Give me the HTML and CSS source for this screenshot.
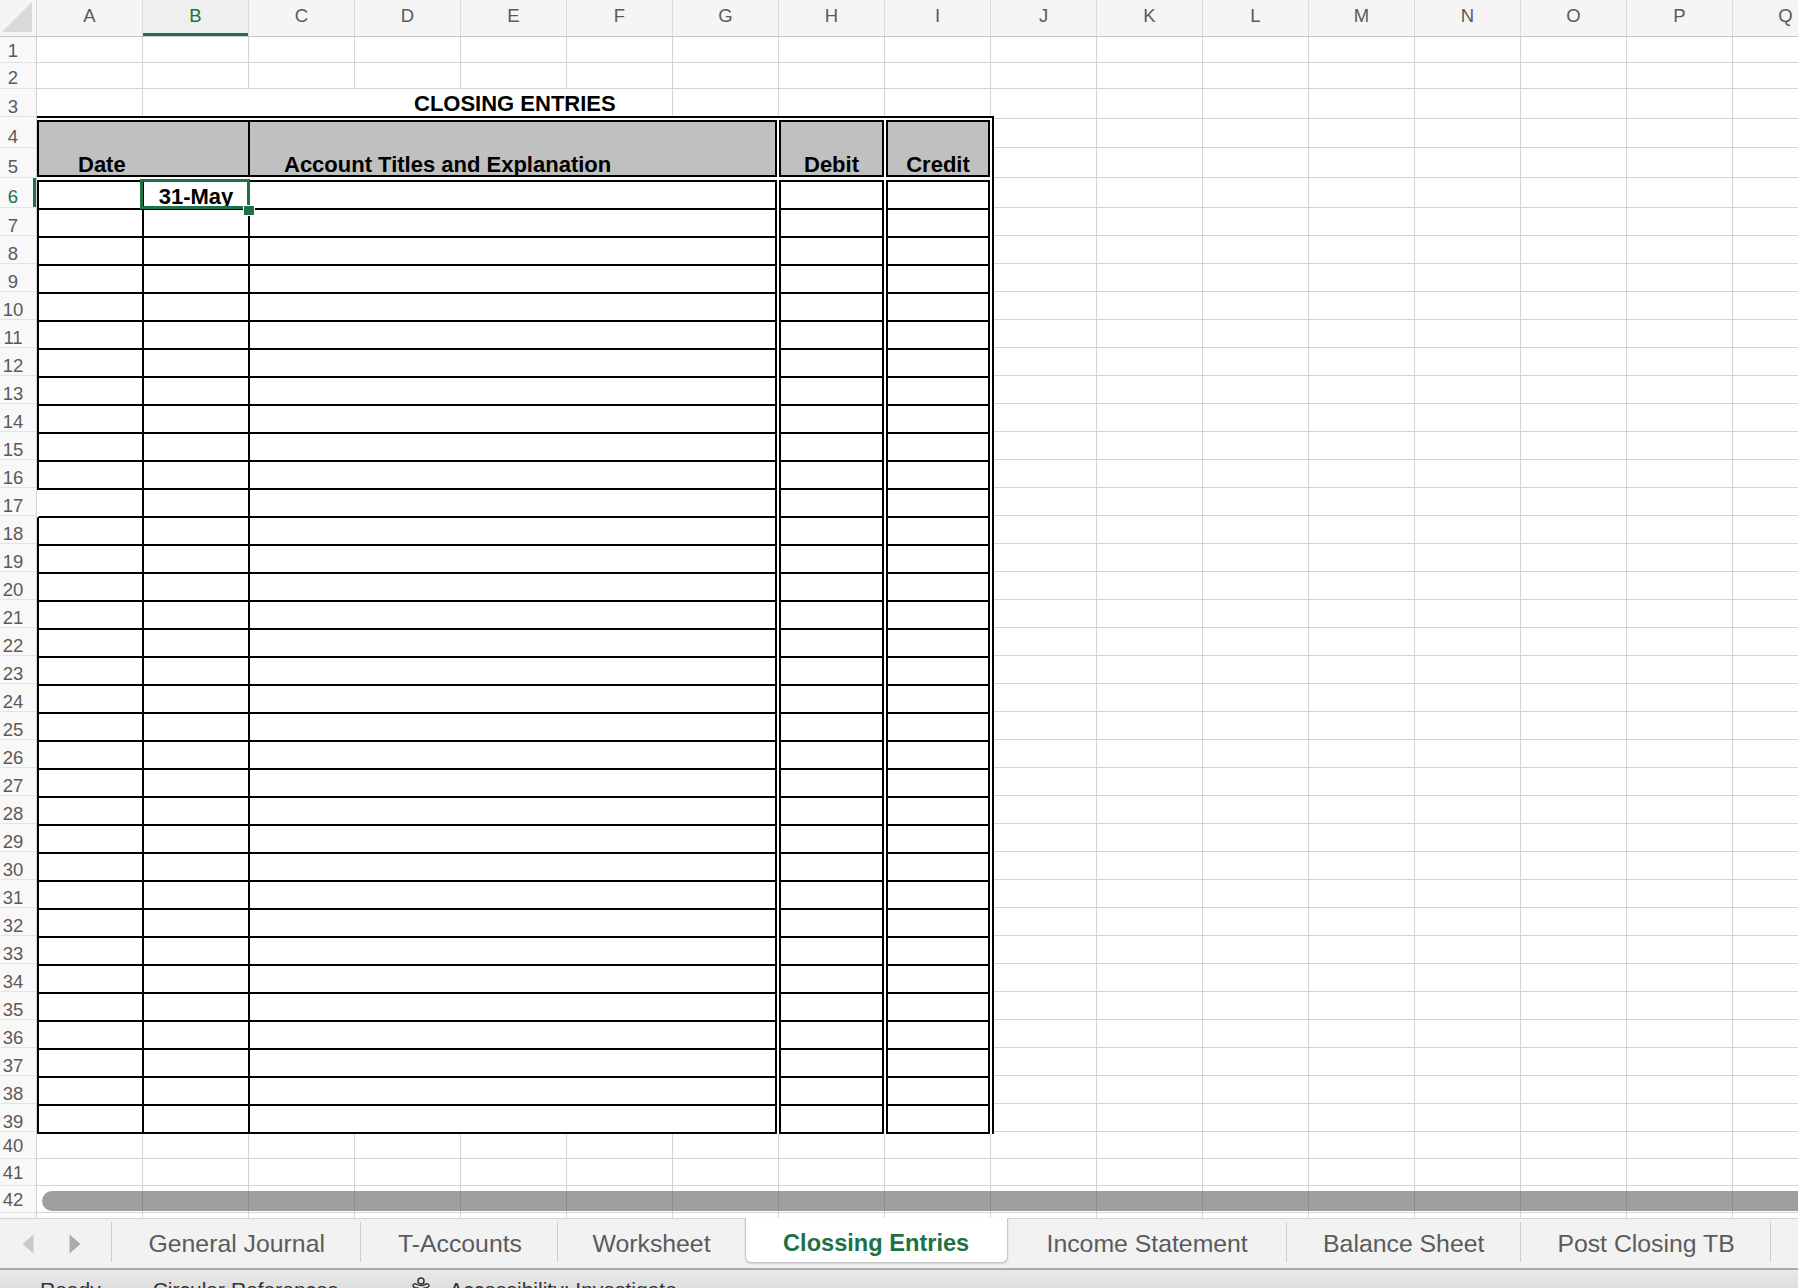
FILE: index.html
```html
<!DOCTYPE html>
<html lang="en">
<head>
<meta charset="utf-8">
<title>Closing Entries</title>
<link rel="stylesheet" href="styles.css">
</head>
<body>
<div class="app">
  <div class="sheet">
    <div class="colhdr">
      <div class="corner"><svg width="30" height="30" viewBox="0 0 30 30"><path d="M30 0 L30 30 L0 30 Z" fill="#d9d9d9"/></svg></div>
      <div class="ch">A</div><div class="ch sel">B</div><div class="ch">C</div><div class="ch">D</div><div class="ch">E</div><div class="ch">F</div><div class="ch">G</div><div class="ch">H</div><div class="ch">I</div><div class="ch">J</div><div class="ch">K</div><div class="ch">L</div><div class="ch">M</div><div class="ch">N</div><div class="ch">O</div><div class="ch">P</div><div class="ch">Q</div>
    </div>
    <div class="grid">
      <div class="rowhdr">
        <div class="rh h26">1</div>
        <div class="rh h26 r2">2</div>
        <div class="rh h28">3</div>
        <div class="rh h31">4</div>
        <div class="rh h30">5</div>
        <div class="rh h30 sel">6</div>
        <div class="rh h28">7</div>
        <div class="rh h28">8</div>
        <div class="rh h28">9</div>
        <div class="rh h28">10</div>
        <div class="rh h28">11</div>
        <div class="rh h28">12</div>
        <div class="rh h28">13</div>
        <div class="rh h28">14</div>
        <div class="rh h28">15</div>
        <div class="rh h28">16</div>
        <div class="rh h28">17</div>
        <div class="rh h28">18</div>
        <div class="rh h28">19</div>
        <div class="rh h28">20</div>
        <div class="rh h28">21</div>
        <div class="rh h28">22</div>
        <div class="rh h28">23</div>
        <div class="rh h28">24</div>
        <div class="rh h28">25</div>
        <div class="rh h28">26</div>
        <div class="rh h28">27</div>
        <div class="rh h28">28</div>
        <div class="rh h28">29</div>
        <div class="rh h28">30</div>
        <div class="rh h28">31</div>
        <div class="rh h28">32</div>
        <div class="rh h28">33</div>
        <div class="rh h28">34</div>
        <div class="rh h28">35</div>
        <div class="rh h28">36</div>
        <div class="rh h28">37</div>
        <div class="rh h28">38</div>
        <div class="rh h28">39</div>
        <div class="rh h27">40</div>
        <div class="rh h27">41</div>
        <div class="rh h27">42</div>
        <div class="rh h27">43</div>
      </div>
      <div class="cells">
        <div class="g h26"></div>
        <div class="g h26"></div>
        <div class="row3">
          <div class="c3a"></div>
          <div class="c3t">CLOSING ENTRIES</div>
          <div class="c3r"></div>
        </div>
        <div class="mid">
          <div class="tbl">
            <div class="thead">
              <div class="hd hdate">Date</div>
              <div class="hd hacct">Account Titles and Explanation</div>
              <div class="hd hdebit">Debit</div>
              <div class="hd hcredit">Credit</div>
            </div>
            <div class="tbody">
              <div class="tr"><span class="da"></span><span class="db cur">31-May<span class="selbox"></span><span class="handle"></span></span><span class="dc"></span><span class="dh"></span><span class="di"></span></div>
              <div class="tr"><span class="da"></span><span class="db"></span><span class="dc"></span><span class="dh"></span><span class="di"></span></div>
              <div class="tr"><span class="da"></span><span class="db"></span><span class="dc"></span><span class="dh"></span><span class="di"></span></div>
              <div class="tr"><span class="da"></span><span class="db"></span><span class="dc"></span><span class="dh"></span><span class="di"></span></div>
              <div class="tr"><span class="da"></span><span class="db"></span><span class="dc"></span><span class="dh"></span><span class="di"></span></div>
              <div class="tr"><span class="da"></span><span class="db"></span><span class="dc"></span><span class="dh"></span><span class="di"></span></div>
              <div class="tr"><span class="da"></span><span class="db"></span><span class="dc"></span><span class="dh"></span><span class="di"></span></div>
              <div class="tr"><span class="da"></span><span class="db"></span><span class="dc"></span><span class="dh"></span><span class="di"></span></div>
              <div class="tr"><span class="da"></span><span class="db"></span><span class="dc"></span><span class="dh"></span><span class="di"></span></div>
              <div class="tr"><span class="da"></span><span class="db"></span><span class="dc"></span><span class="dh"></span><span class="di"></span></div>
              <div class="tr"><span class="da"></span><span class="db"></span><span class="dc"></span><span class="dh"></span><span class="di"></span></div>
              <div class="tr"><span class="da nl"></span><span class="db"></span><span class="dc"></span><span class="dh"></span><span class="di"></span></div>
              <div class="tr"><span class="da"></span><span class="db"></span><span class="dc"></span><span class="dh"></span><span class="di"></span></div>
              <div class="tr"><span class="da"></span><span class="db"></span><span class="dc"></span><span class="dh"></span><span class="di"></span></div>
              <div class="tr"><span class="da"></span><span class="db"></span><span class="dc"></span><span class="dh"></span><span class="di"></span></div>
              <div class="tr"><span class="da"></span><span class="db"></span><span class="dc"></span><span class="dh"></span><span class="di"></span></div>
              <div class="tr"><span class="da"></span><span class="db"></span><span class="dc"></span><span class="dh"></span><span class="di"></span></div>
              <div class="tr"><span class="da"></span><span class="db"></span><span class="dc"></span><span class="dh"></span><span class="di"></span></div>
              <div class="tr"><span class="da"></span><span class="db"></span><span class="dc"></span><span class="dh"></span><span class="di"></span></div>
              <div class="tr"><span class="da"></span><span class="db"></span><span class="dc"></span><span class="dh"></span><span class="di"></span></div>
              <div class="tr"><span class="da"></span><span class="db"></span><span class="dc"></span><span class="dh"></span><span class="di"></span></div>
              <div class="tr"><span class="da"></span><span class="db"></span><span class="dc"></span><span class="dh"></span><span class="di"></span></div>
              <div class="tr"><span class="da"></span><span class="db"></span><span class="dc"></span><span class="dh"></span><span class="di"></span></div>
              <div class="tr"><span class="da"></span><span class="db"></span><span class="dc"></span><span class="dh"></span><span class="di"></span></div>
              <div class="tr"><span class="da"></span><span class="db"></span><span class="dc"></span><span class="dh"></span><span class="di"></span></div>
              <div class="tr"><span class="da"></span><span class="db"></span><span class="dc"></span><span class="dh"></span><span class="di"></span></div>
              <div class="tr"><span class="da"></span><span class="db"></span><span class="dc"></span><span class="dh"></span><span class="di"></span></div>
              <div class="tr"><span class="da"></span><span class="db"></span><span class="dc"></span><span class="dh"></span><span class="di"></span></div>
              <div class="tr"><span class="da"></span><span class="db"></span><span class="dc"></span><span class="dh"></span><span class="di"></span></div>
              <div class="tr"><span class="da"></span><span class="db"></span><span class="dc"></span><span class="dh"></span><span class="di"></span></div>
              <div class="tr"><span class="da"></span><span class="db"></span><span class="dc"></span><span class="dh"></span><span class="di"></span></div>
              <div class="tr"><span class="da"></span><span class="db"></span><span class="dc"></span><span class="dh"></span><span class="di"></span></div>
              <div class="tr"><span class="da"></span><span class="db"></span><span class="dc"></span><span class="dh"></span><span class="di"></span></div>
              <div class="tr"><span class="da"></span><span class="db"></span><span class="dc"></span><span class="dh"></span><span class="di"></span></div>
            </div>
          </div>
          <div class="right">
            <div class="rs rs0"></div>
            <div class="rs rs4"></div>
            <div class="rs rs5"></div>
            <div class="rs rs6"></div>
            <div class="rs7"></div>
          </div>
        </div>
        <div class="g h25"></div>
        <div class="g h27"></div>
        <div class="g h27"></div>
        <div class="g h27"></div>
      </div>
    </div>
    <div class="hscroll"></div>
  </div>
  <div class="tabs">
    <div class="nav">
      <svg width="12" height="20" viewBox="0 0 12 20"><path d="M11.5 0.5 L0.5 10 L11.5 19.5 Z" fill="#c8c8c8"/></svg>
      <svg width="12" height="20" viewBox="0 0 12 20"><path d="M0.5 0.5 L11.5 10 L0.5 19.5 Z" fill="#ababab"/></svg>
    </div>
    <div class="tab">General Journal</div>
    <div class="tab">T-Accounts</div>
    <div class="tab pre">Worksheet</div>
    <div class="tab active">Clossing Entries</div>
    <div class="tab wide">Income Statement</div>
    <div class="tab">Balance Sheet</div>
    <div class="tab">Post Closing TB</div>
  </div>
  <div class="status">
    <span class="st-ready">Ready</span>
    <span class="st-circ">Circular References</span>
    <span class="st-acc"><svg width="20" height="20" viewBox="0 0 20 20"><circle cx="10" cy="4" r="3" fill="none" stroke="#333" stroke-width="1.5"/><path d="M2 8.5 C2 6.5 4.5 6.5 6 7.5 C8 8.8 12 8.8 14 7.5 C15.5 6.5 18 6.5 18 8.5 C18 10.5 14 11 13 11 L13 18 M7 18 L7 11 C6 11 2 10.5 2 8.5 Z" fill="none" stroke="#333" stroke-width="1.5"/></svg><span>Accessibility: Investigate</span></span>
  </div>
</div>
</body>
</html>
```

FILE: styles.css
```css
html, body {
  margin: 0;
  padding: 0;
}

body {
  width: 1798px;
  height: 1288px;
  overflow: hidden;
  background: #fff;
  color: #000;
  font-family: "Liberation Sans", Arial, sans-serif;
}

.app {
  display: flex;
  flex-direction: column;
  height: 1288px;
}

/* ---------- sheet ---------- */
.sheet {
  position: relative;
  flex: none;
  height: 1218px;
  overflow: hidden;
}

.colhdr {
  display: flex;
  height: 37px;
  box-sizing: border-box;
  border-bottom: 1px solid #c6c6c6;
  background: #f5f5f5;
}

.corner {
  flex: none;
  width: 37px;
  box-sizing: border-box;
  border-right: 1px solid #d8d8d8;
  display: flex;
  align-items: flex-end;
  justify-content: flex-end;
}

.corner svg {
  display: block;
  margin: 0 4px 4px 0;
}

.ch {
  flex: none;
  width: 106px;
  box-sizing: border-box;
  border-right: 1px solid #dcdcdc;
  display: flex;
  align-items: center;
  justify-content: center;
  padding-bottom: 4px;
  font-size: 18.5px;
  color: #5a5a5a;
}

.ch.sel {
  color: #1e7145;
  background: #efefef;
  box-shadow: inset 0 -3px 0 #1e7145;
}

.grid {
  display: flex;
}

.rowhdr {
  flex: none;
  width: 37px;
  box-sizing: border-box;
  background: #f8f8f8;
  border-right: 1px solid #d0d0d0;
}

.rh {
  box-sizing: border-box;
  border-bottom: 1px solid #e3e3e3;
  display: flex;
  align-items: center;
  justify-content: center;
  padding: 2px 10px 0 0;
  font-size: 18.5px;
  color: #5a5a5a;
}

.rh.r2 { padding-top: 4px; }
.rh.h28 { padding-top: 9px; }
.rh.h31 { padding-top: 10px; }
.rh.h30 { padding-top: 8px; }

.rh.sel {
  color: #1e7145;
  box-shadow: inset -3px 0 0 #1e7145;
}

.h25 { height: 25px; }
.h26 { height: 26px; }
.h27 { height: 27px; }
.h28 { height: 28px; }
.h30 { height: 30px; }
.h31 { height: 31px; }

.cells {
  flex: 1;
  min-width: 0;
}

.g {
  box-sizing: border-box;
  border-bottom: 1px solid #d4d4d4;
  background-image: repeating-linear-gradient(90deg, transparent 0 105px, #d4d4d4 105px 106px);
}

/* row 3 with title */
.row3 {
  display: flex;
  height: 27px;
}

.c3a {
  flex: none;
  width: 106px;
  box-sizing: border-box;
  border-right: 1px solid #d4d4d4;
}

.c3t {
  flex: none;
  width: 530px;
  box-sizing: border-box;
  border-right: 1px solid #d4d4d4;
  padding: 4px 0 0 271px;
  font-weight: bold;
  font-size: 22px;
  line-height: 22px;
  white-space: nowrap;
}

.c3r {
  flex: 1;
  background-image: repeating-linear-gradient(90deg, transparent 0 105px, #d4d4d4 105px 106px);
}

/* ---------- journal table ---------- */
.mid {
  display: flex;
}

.tbl {
  flex: none;
  width: 957px;
  box-sizing: border-box;
  border-top: 2px solid #000;
  border-right: 2px solid #000;
  padding: 2px 2px 0 0;
}

.thead {
  display: flex;
  height: 57px;
  margin-bottom: 3px;
}

.hd {
  flex: none;
  box-sizing: border-box;
  background: #c0c0c0;
  border: 2px solid #000;
  display: flex;
  align-items: flex-end;
  font-weight: bold;
  font-size: 22px;
  line-height: 20px;
  white-space: nowrap;
}

.hdate {
  width: 213px;
  padding-left: 39px;
}

.hacct {
  width: 527px;
  border-left: none;
  padding-left: 34px;
}

.hdebit {
  width: 105px;
  margin-left: 2px;
  justify-content: center;
}

.hcredit {
  width: 104px;
  margin-left: 2px;
  justify-content: center;
}

.tr {
  display: flex;
  height: 28px;
}

.tr:first-child {
  height: 30px;
}

.tr > span {
  display: block;
  flex: none;
  box-sizing: border-box;
  border-bottom: 2px solid #000;
}

.tr:first-child > span {
  border-top: 2px solid #000;
}

.da {
  width: 107px;
  border-left: 2px solid #000;
  border-right: 2px solid #000;
}

.da.nl {
  border-left-color: transparent;
}

.db {
  width: 106px;
  border-right: 2px solid #000;
}

.dc {
  width: 527px;
  border-right: 2px solid #000;
}

.dh {
  width: 105px;
  margin-left: 2px;
  border-left: 2px solid #000;
  border-right: 2px solid #000;
}

.di {
  width: 104px;
  margin-left: 2px;
  border-left: 2px solid #000;
  border-right: 2px solid #000;
}

.tr > .db.cur {
  position: relative;
  display: flex;
  align-items: center;
  justify-content: center;
  padding-top: 3px;
  font-weight: bold;
  font-size: 22px;
  line-height: 26px;
  white-space: nowrap;
}

.selbox {
  position: absolute;
  left: -4px;
  right: -2px;
  top: -3px;
  bottom: -1px;
  border: 3px solid #1e7145;
}

.handle {
  position: absolute;
  left: 100px;
  top: 24px;
  width: 10px;
  height: 9px;
  background: #1e7145;
  box-shadow: 0 0 0 1px #fff;
}

/* gridlines right of table */
.right {
  flex: 1;
  min-width: 0;
  display: flex;
  flex-direction: column;
}

.rs {
  flex: none;
  box-sizing: border-box;
  border-bottom: 1px solid #d4d4d4;
  background-image: repeating-linear-gradient(90deg, transparent 0 105px, #d4d4d4 105px 106px);
  background-position: -3px 0;
}

.rs0 { height: 3px; }
.rs4 { height: 29px; }
.rs5 { height: 30px; }
.rs6 { height: 30px; }

.rs7 {
  flex: 1;
  background-image:
    repeating-linear-gradient(90deg, transparent 0 105px, #d4d4d4 105px 106px),
    repeating-linear-gradient(180deg, transparent 0 27px, #d4d4d4 27px 28px);
  background-position: -3px 0, 0 0;
}

.hscroll {
  position: absolute;
  left: 42px;
  right: -40px;
  top: 1191px;
  height: 20px;
  border-radius: 10px;
  background: rgba(90, 90, 90, 0.58);
}

/* ---------- sheet tabs ---------- */
.tabs {
  flex: none;
  height: 50px;
  box-sizing: border-box;
  border-top: 1px solid #d3d3d3;
  background: #f2f2f2;
  display: flex;
}

.nav {
  flex: none;
  width: 112px;
  box-sizing: border-box;
  position: relative;
  display: flex;
  align-items: center;
  gap: 35px;
  padding: 1px 0 0 22px;
}

.nav svg {
  display: block;
}

.tab {
  flex: none;
  position: relative;
  display: flex;
  align-items: center;
  padding: 0 36.5px;
  font-size: 24.8px;
  color: #5b5b5b;
  white-space: nowrap;
}

.tab.pre {
  padding: 0 34px;
}

.tab.wide {
  padding: 0 38.8px;
}

.nav::after,
.tab::after {
  content: "";
  position: absolute;
  right: 0;
  top: 3px;
  bottom: 6px;
  width: 1px;
  background: #cdcdcd;
}

.tab.pre::after,
.tab.active::after {
  display: none;
}

.tab.active {
  align-self: flex-start;
  height: 45px;
  margin-top: -1px;
  box-sizing: border-box;
  padding: 7px 37.5px 0;
  background: #fff;
  border: 1px solid #c8c8c8;
  border-top: none;
  border-radius: 0 0 6px 6px;
  box-shadow: 0 1px 2px rgba(0, 0, 0, 0.15);
  color: #1e7145;
  font-weight: bold;
  font-size: 23.6px;
}

/* ---------- status bar ---------- */
.status {
  flex: none;
  height: 20px;
  box-sizing: border-box;
  border-top: 2px solid #a9a9a9;
  background: linear-gradient(#e9e9e9, #dedede);
  display: flex;
  align-items: flex-start;
  padding-top: 9px;
  overflow: hidden;
  font-size: 21px;
  line-height: 22px;
  color: #333;
  white-space: nowrap;
}

.st-ready {
  margin-left: 40px;
}

.st-circ {
  margin-left: 52px;
}

.st-acc {
  margin-left: 73px;
  display: flex;
  align-items: flex-start;
  gap: 18px;
}

.st-acc svg {
  display: block;
  margin-top: -2px;
}
```
